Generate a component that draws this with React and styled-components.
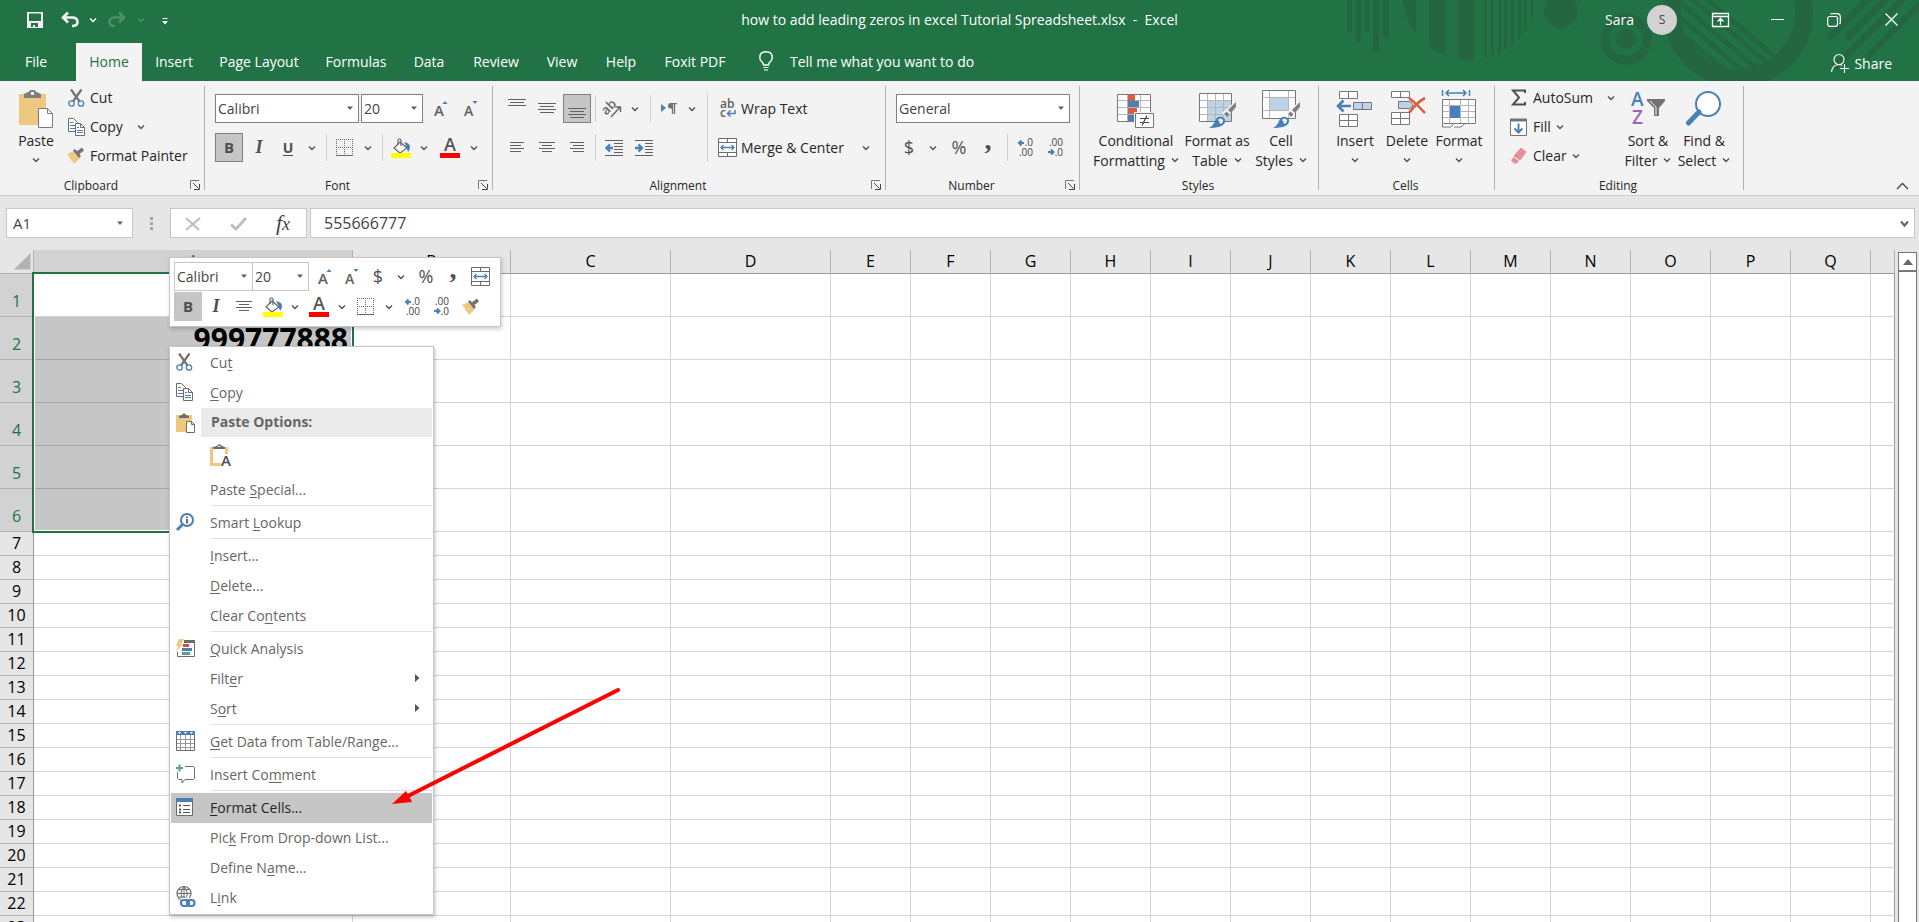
import React from 'react';
import styled, { createGlobalStyle } from 'styled-components';

const App = () => {
	return (
		<>
			<GlobalStyle />
			<Window>
				<Banner>
					<BannerArt />
					<TitleBar />
					<TabBar />
				</Banner>
				<Ribbon />
				<FormulaBar />
				<Sheet />
			</Window>
		</>
	);
};

export default App;

/* Data --- */

const tabs = [
	{ name: 'File', width: 72 },
	{ name: 'Home', width: 66, active: true },
	{ name: 'Insert', width: 64 },
	{ name: 'Page Layout', width: 106 },
	{ name: 'Formulas', width: 88 },
	{ name: 'Data', width: 58 },
	{ name: 'Review', width: 76 },
	{ name: 'View', width: 56 },
	{ name: 'Help', width: 62 },
	{ name: 'Foxit PDF', width: 86 },
];

const columns = [
	{ name: 'A', width: 319 },
	{ name: 'B', width: 158 },
	{ name: 'C', width: 160 },
	{ name: 'D', width: 160 },
	...'EFGHIJKLMNOPQ'.split('').map((name) => ({ name, width: 80 })),
];

const rows = Array.from({ length: 23 }, (_, i) => i + 1);
const lastSelected = 6;
const cellValues = { A2: '999777888' };

/* An ampersand marks the access key of the entry. */
const menuItems = [
	{ label: 'Cu&t', icon: 'cut' },
	{ label: '&Copy', icon: 'copy' },
	{ heading: 'Paste Options:', icon: 'pasteSmall' },
	{ paste: true },
	{ label: 'Paste &Special...' },
	{ line: true },
	{ label: 'Smart &Lookup', icon: 'lookup' },
	{ line: true },
	{ label: '&Insert...' },
	{ label: '&Delete...' },
	{ label: 'Clear Co&ntents' },
	{ line: true },
	{ label: '&Quick Analysis', icon: 'analysis' },
	{ label: 'Filt&er', sub: true },
	{ label: 'S&ort', sub: true },
	{ line: true },
	{ label: '&Get Data from Table/Range...', icon: 'dataTable' },
	{ line: true },
	{ label: 'Insert Co&mment', icon: 'comment' },
	{ line: true },
	{ label: '&Format Cells...', icon: 'formatCells', active: true },
	{ label: 'Pic&k From Drop-down List...' },
	{ label: 'Define N&ame...' },
	{ label: 'L&ink', icon: 'link' },
];

/* Icons --- */

const gray = '#737373';
const blue = '#4a7fb8';
const sans = '"Open Sans", "Noto Sans", sans-serif';

const Svg = ({ w, h, children, ...rest }) => (
	<svg width={w} height={h} viewBox={`0 0 ${w} ${h}`} fill="none" aria-hidden="true" {...rest}>
		{children}
	</svg>
);

const Chevron = ({ color = '#505050' }) => (
	<Svg w={8} h={6}>
		<path d="M1 1.5L4 4.5L7 1.5" stroke={color} strokeWidth="1.4" />
	</Svg>
);

const Triangle = () => (
	<Svg w={8} h={5}>
		<path d="M1 0.5H7L4 4Z" fill="#606060" />
	</Svg>
);

const Launcher = () => (
	<Svg w={10} h={10}>
		<path d="M0.5 9V0.5H9" stroke="#777" />
		<path d="M3 3L8.5 8.5M9.5 4V9.5H4" stroke="#444" />
	</Svg>
);

const lines = (rowsOfLines) =>
	rowsOfLines.map(([x1, x2, y]) => <path key={y} d={`M${x1} ${y + 0.5}H${x2}`} stroke="#606060" />);

const icons = {
	paste: (
		<Svg w={34} h={38}>
			<path d="M0 4H27V35H0Z" fill="#eec881" />
			<path d="M5 8V4L9 2H10Q10 0 12 0H15Q17 0 17 2H18L22 4V8Z" fill="#7f7f7f" />
			<path d="M12 2H15V5H12Z" fill="#f3f3f3" />
			<path d="M19.5 18.5H28.5L33.5 23.5V37.5H19.5Z" fill="#fff" stroke="#7a7a7a" />
			<path d="M28.5 18.5V23.5H33.5" stroke="#7a7a7a" />
		</Svg>
	),
	pasteSmall: (
		<Svg w={19} h={20}>
			<path d="M0 2H16V19H0Z" fill="#eec881" />
			<path d="M3 5V3L6 2Q8 -1.5 10 2L13 3V5Z" fill="#6b6b6b" />
			<path d="M10.5 8.5H15.5L18.5 11.5V19.5H10.5Z" fill="#fff" stroke="#6b6b6b" />
			<path d="M15.5 8.5V11.5H18.5" stroke="#6b6b6b" />
		</Svg>
	),
	pasteText: (
		<Svg w={22} h={23}>
			<path d="M1.5 3V20.5H11M16.5 3V10" stroke="#eec881" strokeWidth="3" />
			<path d="M3 5V3L7 2Q9.500 -1.5 12 2L15 3V5Z" fill="#6b6b6b" />
			<path d="M8 2.5H10.5" stroke="#fff" />
			<text x="11" y="22" fontFamily={sans} fontWeight="600" fontSize="15" fill="#505050">A</text>
		</Svg>
	),
	cut: (
		<Svg w={17} h={18}>
			<path d="M3 0.5L11.5 12.5M13.5 0.5L5 12.5" stroke={gray} strokeWidth="2.2" />
			<circle cx="3.5" cy="14.5" r="2.7" stroke={blue} strokeWidth="1.3" />
			<circle cx="13" cy="14.5" r="2.7" stroke={blue} strokeWidth="1.3" />
		</Svg>
	),
	copy: (
		<Svg w={17} h={18}>
			<path d="M0.5 0.5H5.5L9.5 4.5V13.5H0.5Z" fill="#fff" stroke="#6b6b6b" />
			<path d="M2 4.5H5M2 7.5H7M2 10.5H7" stroke={blue} />
			<path d="M7.5 5.5H12.5L16.5 9.5V17.5H7.5Z" fill="#fff" stroke="#6b6b6b" />
			<path d="M12.5 5.5V9.5H16.5" stroke="#6b6b6b" />
			<path d="M9 9.5H11M9 12.5H15M9 14.5H15" stroke={blue} />
		</Svg>
	),
	painter: (
		<Svg w={18} h={16}>
			<path d="M0 6L7 3L13 10L7 16Q6 13 4 12Q3 9 0 6Z" fill="#eec881" />
			<path d="M6 2.5L8 1L14 8L12 10Z" fill={gray} />
			<path d="M10 5.5L16 1" stroke={gray} strokeWidth="3.5" />
		</Svg>
	),
	growFont: (
		<Svg w={14} h={16}>
			<text x="0" y="15" fontFamily={sans} fontWeight="600" fontSize="15" fill="#606060">A</text>
			<path d="M8.5 3H13.5L11 0Z" fill={blue} />
		</Svg>
	),
	shrinkFont: (
		<Svg w={14} h={16}>
			<text x="0" y="15" fontFamily={sans} fontWeight="600" fontSize="14" fill="#606060">A</text>
			<path d="M8.5 0H13.5L11 3Z" fill={blue} />
		</Svg>
	),
	borders: (
		<Svg w={17} h={17} shapeRendering="crispEdges">
			<path d="M0 0.5H17M0.5 0V16M16.5 0V16M8.5 0V16M0 8.5H17" stroke="#666" strokeDasharray="1 1" />
			<path d="M0 16.5H17" stroke="#666" />
		</Svg>
	),
	fillColor: (
		<Svg w={20} h={20}>
			<path d="M9 4L16 10L9 15L3 10Z" fill="#fff" stroke="#666" strokeWidth="1.2" />
			<path d="M7 7V2Q8.5 -0.5 10 2V8" stroke="#666" strokeWidth="1.2" />
			<path d="M13 4Q19 5 19 9Q19 12 17 14Q16 9 13 4Z" fill={blue} />
			<path d="M0 15H20V20H0Z" fill="#ff0" />
		</Svg>
	),
	fontColor: (
		<Svg w={20} h={20}>
			<text x="4" y="13" fontFamily={sans} fontWeight="600" fontSize="18" fill="#555">A</text>
			<path d="M0 15H20V20H0Z" fill="#f00" />
		</Svg>
	),
	alignTop: <Svg w={18} h={20}>{lines([[0, 18, 0], [2, 16, 3], [0, 18, 6]])}</Svg>,
	alignMiddle: <Svg w={18} h={12}>{lines([[0, 18, 0], [2, 16, 3], [0, 18, 6], [2, 16, 9]])}</Svg>,
	alignBottom: <Svg w={18} h={20}>{lines([[0, 18, 9], [2, 16, 12], [0, 18, 15], [2, 16, 18]])}</Svg>,
	alignLeft: <Svg w={14} h={12}>{lines([[0, 14, 0], [0, 11, 3], [0, 14, 6], [0, 11, 9]])}</Svg>,
	alignCenter: <Svg w={16} h={12}>{lines([[0, 16, 0], [3, 13, 3], [0, 16, 6], [3, 13, 9]])}</Svg>,
	alignRight: <Svg w={14} h={12}>{lines([[0, 14, 0], [3, 14, 3], [0, 14, 6], [3, 14, 9]])}</Svg>,
	orientation: (
		<Svg w={20} h={18}>
			<text x="0" y="12" transform="rotate(-45 6 10)" fontFamily={sans} fontWeight="600" fontSize="13" fill="#666">ab</text>
			<path d="M8 17L17 7M12.5 7H17.5V12" stroke="#666" strokeWidth="1.4" />
		</Svg>
	),
	direction: (
		<Svg w={16} h={12}>
			<path d="M0 1L5 5L0 9Z" fill={blue} />
			<path d="M11.5 0V11M13.5 0V11M9 0.7H16" stroke={gray} strokeWidth="1.3" />
			<path d="M11 0H9.5Q7 0 7 3Q7 5.5 9.5 5.5H11Z" fill={gray} />
		</Svg>
	),
	outdent: (
		<Svg w={18} h={16}>
			{lines([[0, 18, 0], [9, 18, 3], [9, 18, 6], [9, 18, 9], [9, 18, 12], [0, 18, 15]])}
			<path d="M8 8H1.5M5 4.5L1.5 8L5 11.5" stroke={blue} strokeWidth="2.4" />
		</Svg>
	),
	indent: (
		<Svg w={18} h={16}>
			{lines([[0, 18, 0], [10, 18, 3], [10, 18, 6], [10, 18, 9], [10, 18, 12], [0, 18, 15]])}
			<path d="M0 8H6.5M3.5 4.5L7 8L3.5 11.5" stroke={blue} strokeWidth="2.4" />
		</Svg>
	),
	wrap: (
		<Svg w={18} h={18}>
			<text x="2" y="8" fontFamily={sans} fontWeight="600" fontSize="12" fill="#606060">ab</text>
			<text x="2" y="17" fontFamily={sans} fontWeight="600" fontSize="12" fill="#606060">c</text>
			<path d="M17 10V13.5H10M12.5 10.5L9.5 13.5L12.5 16.5" stroke={blue} strokeWidth="1.5" />
		</Svg>
	),
	merge: (
		<Svg w={19} h={19}>
			<path d="M0.5 0.5H18.5V18.5H0.5ZM0.5 4.5H18.5M0.5 14.5H18.5M9.5 0.5V4.5M9.5 14.5V18.5" fill="#fff" stroke="#6b6b6b" />
			<path d="M3 9.5H16M5.5 7L3 9.5L5.5 12M13.5 7L16 9.5L13.5 12" stroke={blue} strokeWidth="1.4" />
		</Svg>
	),
	moreDecimals: (
		<Svg w={16} h={18}>
			<path d="M6 4H1M3.5 1.5L1 4L3.5 6.5" stroke={blue} strokeWidth="2" />
			<text x="15" y="7" textAnchor="end" fontFamily={sans} fontSize="10" fill="#444">.0</text>
			<text x="15" y="17" textAnchor="end" fontFamily={sans} fontSize="10" fill="#444">.00</text>
		</Svg>
	),
	fewerDecimals: (
		<Svg w={16} h={18}>
			<path d="M0 13H5M3 10.5L5.500 13L3 15.5" stroke={blue} strokeWidth="2" />
			<text x="15" y="7" textAnchor="end" fontFamily={sans} fontSize="10" fill="#444">.00</text>
			<text x="15" y="17" textAnchor="end" fontFamily={sans} fontSize="10" fill="#444">.0</text>
		</Svg>
	),
	conditional: (
		<Svg w={38} h={38}>
			<path d="M0.5 4.5H33.5V31.5H0.5Z" fill="#fff" />
			<path d="M0.5 10.5H33.5M0.5 17.5H33.5M0.5 24.5H33.5M10.5 4V31M23.5 4V31" stroke="#b5b5b5" />
			<path d="M0.5 4.5H33.5V31.5H0.5Z" stroke="#777" />
			<path d="M11 5H18V11H11ZM11 18H20V24H11Z" fill="#d75f3d" />
			<path d="M11 11H22V17H11ZM11 25H17V31H11Z" fill={blue} />
			<path d="M17 22H37V38H17Z" fill="#f3f3f3" />
			<path d="M18.5 23.5H36.5V37.5H18.5Z" fill="#fff" stroke="#777" />
			<path d="M23 28.5H32M23 32.5H32M30 25.5L25 35.5" stroke="#444" strokeWidth="1.2" />
		</Svg>
	),
	formatTable: (
		<Svg w={38} h={38}>
			<path d="M1.5 3.5H33.5V31.5H1.5Z" fill="#fff" />
			<path d="M10 11H33V31H10Z" fill="#bed2e8" />
			<path d="M1 10.5H34M1 17.5H34M1 24.5H34M9.5 3V31M17.5 3V31M25.5 3V31" stroke="#b5b5b5" />
			<path d="M1.5 3.5H33.5V31.5H1.5Z" stroke="#777" />
			<Brush />
		</Svg>
	),
	cellStyles: (
		<Svg w={38} h={38}>
			<path d="M0.5 0.5H33.5V28.5H0.5Z" fill="#fff" />
			<path d="M8 8H26V20H8Z" fill="#bed2e8" />
			<path d="M0 7.5H34M0 20.5H34M7.5 0V28M26.5 0V28" stroke="#b5b5b5" />
			<path d="M0.5 0.5H33.5V28.5H0.5Z" stroke="#777" />
			<Brush />
		</Svg>
	),
	insertCells: (
		<Svg w={38} h={38}>
			<path d="M3.5 1.5H21.5V8.5H3.5ZM12.5 1.5V8.5M3.5 24.5H21.5V36.5H3.5ZM12.5 24.5V36.5M3.5 30.5H21.5" fill="#fff" stroke="#777" />
			<path d="M17.5 12.5H35.5V19.5H17.5ZM26.5 12.5V19.5" fill="#bed2e8" stroke="#777" />
			<path d="M15 16H2M7.5 10.5L2 16L7.5 21.5" stroke={blue} strokeWidth="2.6" />
		</Svg>
	),
	deleteCells: (
		<Svg w={38} h={38}>
			<path d="M3.5 1.5H21.5V7.5H3.5ZM12.5 1.5V7.5M3.5 22.5H21.5V34.5H3.5ZM12.5 22.5V34.5M3.5 28.5H21.5" fill="#fff" stroke="#777" />
			<path d="M10.5 11.5H22L25 15L22 18.5H10.5Z" fill="#bed2e8" stroke="#777" />
			<path d="M21 8Q29 14 37 23M37 8Q28 13 21 23" stroke="#d75f3d" strokeWidth="2.6" />
		</Svg>
	),
	formatCellsBig: (
		<Svg w={38} h={38}>
			<path d="M2.5 0V6M29.5 0V6M6 3H26M9 0L6 3L9 6M23 0L26 3L23 6" stroke={blue} strokeWidth="1.5" />
			<path d="M2.5 9.5H35.5V33.5H2.5Z" fill="#fff" stroke="#777" />
			<path d="M3 15.5H35M3 27.5H35M9.5 10V33M20.5 10V33M28.5 10V33M3 21.5H35" stroke="#b5b5b5" />
			<path d="M10 16H20V28H10Z" fill={blue} />
			<path d="M2.5 33.5V37H11L14 33.5H25L21 37H14" fill="#fff" stroke="#777" />
		</Svg>
	),
	sum: (
		<Svg w={18} h={18}>
			<path d="M15 4V1.5H3L9 8.5L3 15.5H15V13" stroke="#505050" strokeWidth="2" />
		</Svg>
	),
	fill: (
		<Svg w={18} h={18}>
			<path d="M0.5 1.5H16.5V17.5H0.5Z" fill="#fff" stroke={gray} />
			<path d="M0 2H17" stroke={gray} strokeWidth="3" />
			<path d="M8.5 5.5V14M4.5 10.5L8.5 14.5L12.5 10.5" stroke={blue} strokeWidth="2" />
		</Svg>
	),
	clear: (
		<Svg w={18} h={18}>
			<path d="M11 1L16 5L10 13L4 9Z" fill="#e88d9b" stroke="#e88d9b" strokeLinejoin="round" />
			<path d="M3.5 10L9 14L7 16.5H4L1 13.5Z" fill="#e88d9b" />
		</Svg>
	),
	sort: (
		<Svg w={36} h={38}>
			<text x="1" y="16" fontFamily={sans} fontWeight="600" fontSize="19" fill={blue}>A</text>
			<text x="2" y="34" fontFamily={sans} fontWeight="600" fontSize="19" fill="#9b62b8">Z</text>
			<path d="M17 9H35V11L29 18V26H24V18L17 11Z" fill={gray} />
			<path d="M20 11L26 17V25" stroke="#f3f3f3" />
		</Svg>
	),
	find: (
		<Svg w={36} h={38}>
			<circle cx="22" cy="14" r="12" fill="#fff" stroke={blue} strokeWidth="2" />
			<path d="M13 22L2.5 33" stroke={blue} strokeWidth="5" strokeLinecap="round" />
		</Svg>
	),
	lookup: (
		<Svg w={18} h={18}>
			<circle cx="11" cy="7" r="6" fill="#fff" stroke={blue} strokeWidth="2" />
			<path d="M6.5 11.5L1 17" stroke={blue} strokeWidth="3" />
			<path d="M11 6V10.5M11 3.5V5" stroke="#444" strokeWidth="1.6" />
		</Svg>
	),
	analysis: (
		<Svg w={19} h={18}>
			<path d="M1.5 13V17.5H18.5V3" stroke="#6b6b6b" />
			<path d="M8 1H19V4H8Z" fill="#6b6b6b" />
			<path d="M7 5H13V8H7Z" fill="#d0532f" />
			<path d="M6 9H16V12H6Z" fill={blue} />
			<path d="M6 13H14V16H6Z" fill="#5f9e89" />
			<path d="M3 0H8L5 5H7L0 13L2 7H0Z" fill="#eec881" />
		</Svg>
	),
	dataTable: (
		<Svg w={19} h={20}>
			<path d="M0.5 0.5H18.5V19.5H0.5Z" fill="#fff" />
			<path d="M0 8.5H19M0 12.5H19M0 16.5H19M4.5 4V19M9.5 4V19M14.5 4V19" stroke="#999" />
			<path d="M0.5 3V19.5H18.5V3" stroke="#6b6b6b" />
			<path d="M0 0H19V4H0Z" fill={blue} />
			<path d="M2 1H5L3.5 3ZM8 1H11L9.5 3ZM14 1H17L15.5 3Z" fill="#fff" />
		</Svg>
	),
	comment: (
		<Svg w={19} h={20}>
			<path d="M9 2.5H17.5L18.5 3.5V14.5L17.5 15.5H9L6 19V15.5H2.5L1.5 14.5V8" stroke="#6b6b6b" />
			<path d="M0 4H7M3.5 0.5V7.5" stroke="#5f9e89" strokeWidth="2" />
		</Svg>
	),
	formatCells: (
		<Svg w={17} h={18}>
			<path d="M0.5 0.5H16.5V17.5H0.5Z" fill="#fff" stroke="#6b6b6b" />
			<path d="M0 0H17V4H0Z" fill={blue} />
			<path d="M7 7.5H14M7 11.5H14M7 14.5H14" stroke="#555" />
			<path d="M3 7.5H5M3 11.5H5M3 14.5H5" stroke="#555" strokeWidth="2" />
		</Svg>
	),
	link: (
		<Svg w={20} h={22}>
			<circle cx="8" cy="7.5" r="7" stroke="#6b6b6b" strokeWidth="1.2" />
			<path d="M8 0.5V14M1 7.5H15M2.5 3.5H13.5M2.5 11H9M8 0.5Q2 7.5 8 14.5M8 0.5Q14 7.5 9 13" stroke="#6b6b6b" />
			<path d="M5 12H20V22H5Z" fill="#fff" />
			<rect x="5" y="14" width="8" height="6" rx="3" stroke={blue} strokeWidth="2.2" />
			<rect x="11" y="14" width="7.500" height="6" rx="3" stroke={blue} strokeWidth="2.2" />
		</Svg>
	),
	bulb: (
		<Svg w={14} h={20}>
			<path d="M4.5 14Q4.5 12 2.5 10.5Q0.8 9 0.8 6.5Q0.8 0.8 7 0.8Q13.2 0.8 13.2 6.5Q13.2 9 11.5 10.5Q9.5 12 9.5 14Z" stroke="#fff" strokeWidth="1.4" />
			<path d="M4.5 16.5H9.5M5 19H9" stroke="#fff" strokeWidth="1.2" />
		</Svg>
	),
	save: (
		<Svg w={16} h={16}>
			<path d="M0 0H16V16H0ZM2 1.5V9H14V1.5ZM4 11V15H6V13H8V15H11V11Z" fill="#f3f3f3" fillRule="evenodd" />
		</Svg>
	),
	undo: (
		<Svg w={18} h={16}>
			<path d="M2 5.5H11Q16.5 5.5 16.5 10Q16.5 14 11 14M7 0.5L2 5.5L7 10.5" stroke="#f3f3f3" strokeWidth="2.6" />
		</Svg>
	),
	redo: (
		<Svg w={18} h={16}>
			<path d="M16 5.5H7Q1.5 5.5 1.5 10Q1.5 14 7 14M11 0.5L16 5.5L11 10.5" stroke="#4a9069" strokeWidth="2.6" />
		</Svg>
	),
	customize: (
		<Svg w={6} h={7}>
			<path d="M0.5 0.5H5.5" stroke="#fff" />
			<path d="M0 3H6L3 6.5Z" fill="#fff" />
		</Svg>
	),
	ribbonDisplay: (
		<Svg w={17} h={14}>
			<path d="M0.5 0.5H16.5V13.5H0.5ZM0.5 3.5H16.5M8.5 12V6M5.5 8.5L8.5 5.5L11.5 8.5" stroke="#fff" strokeWidth="1.3" />
		</Svg>
	),
	minimize: <Svg w={13} h={13}><path d="M0 6.5H13" stroke="#fff" /></Svg>,
	restore: (
		<Svg w={14} h={14}>
			<rect x="0.7" y="3.5" width="9.8" height="9.8" rx="2" stroke="#fff" strokeWidth="1.2" />
			<path d="M3.5 1.2Q4 0.7 5 0.7H10Q13.3 0.7 13.3 4V9.5Q13.3 10.5 12.5 11" stroke="#fff" strokeWidth="1.2" />
		</Svg>
	),
	close: <Svg w={13} h={13}><path d="M0.5 0.5L12.5 12.5M12.5 0.5L0.5 12.5" stroke="#fff" strokeWidth="1.3" /></Svg>,
	share: (
		<Svg w={18} h={19}>
			<circle cx="8" cy="5.5" r="5" stroke="#fff" strokeWidth="1.1" />
			<path d="M0.6 18Q1 11 8 10.5Q10 10.5 11 11.5M13.5 10V19M9 14.5H18" stroke="#fff" strokeWidth="1.1" />
		</Svg>
	),
	cancel: <Svg w={16} h={14}><path d="M1 1L14 13M15 1L1 13" stroke="#bdbdbd" strokeWidth="2" /></Svg>,
	check: <Svg w={17} h={14}><path d="M1 7.5L6 12L16 1" stroke="#bdbdbd" strokeWidth="2.8" /></Svg>,
	submenu: <Svg w={5} h={8}><path d="M0 0L4.5 4L0 8Z" fill="#555" /></Svg>,
};

function Brush() {
	return (
		<>
			<path d="M38 11L24 23L28 27L38 18Z" fill="#f3f3f3" />
			<path d="M38 12L30 20L33 23L38 17Z" fill="#808080" />
			<path d="M28.5 21.5L31.5 24.5L29 27L26 24Z" fill="#808080" />
			<path d="M11 38Q15 36 17 31Q19 26 24 27Q29 29 26 34Q23 38 11 38Z" fill={blue} />
			<path d="M20 30Q22 27 25 30Q25 33 22 34Q22 31 20 30Z" fill="#fff" />
		</>
	);
}

function BannerArt() {
	return (
		<Art width="579" height="81" viewBox="1340 0 579 81" aria-hidden="true">
			<defs>
				<clipPath id="disc"><circle cx="1470" cy="-8" r="68" /></clipPath>
				<clipPath id="ring"><circle cx="1736" cy="14" r="58" /></clipPath>
			</defs>
			<path d="M1347 0h5v32h-5zM1356 0h5v42h-5zM1365 0h5v32h-5zM1373 0h6v52h-6zM1383 0h6v38h-6z" />
			<g clipPath="url(#disc)">
				<path d="M1400 0h16v60h-16zM1429 0h17v60h-17zM1458 0h16v60h-16z" />
				{[1484, 1491, 1498, 1504, 1511, 1518, 1524, 1531].map((x) => (
					<rect key={x} x={x} y="0" width="3" height="60" />
				))}
			</g>
			<circle cx="1561" cy="11" r="17" />
			<circle cx="1626" cy="39" r="21" fill="none" stroke="#246642" strokeWidth="9" />
			<circle cx="1626" cy="39" r="10" />
			<circle cx="1738" cy="12" r="66" fill="none" stroke="#246642" strokeWidth="18" />
			<g clipPath="url(#ring)" stroke="#246642" strokeWidth="5">
				<path d="M1670 24L1750 92M1670 9L1760 85M1670 -6L1770 80M1670 -20L1780 74M1685 -20L1790 70" />
			</g>
			<g stroke="#246642" strokeWidth="7">
				<path d="M1828 39L1872 -5M1846 39L1890 -5M1834 68L1907 -5M1866 58L1925 -1" />
			</g>
		</Art>
	);
}

/* Parts --- */

const TitleBar = () => (
	<TitleRow>
		<QuickAccess>
			<BannerButton $w={32} aria-label="Save">{icons.save}</BannerButton>
			<BannerButton $w={38} aria-label="Undo">{icons.undo}</BannerButton>
			<BannerButton $w={8} aria-label="Undo list"><Chevron color="#fff" /></BannerButton>
			<BannerButton $w={40} aria-label="Redo">{icons.redo}</BannerButton>
			<BannerButton $w={8} aria-label="Redo list"><Chevron color="#4a9069" /></BannerButton>
			<BannerButton $w={40} $low aria-label="Customize toolbar">{icons.customize}</BannerButton>
		</QuickAccess>
		<Title>how to add leading zeros in excel Tutorial Spreadsheet.xlsx&nbsp; - &nbsp;Excel</Title>
		<WindowTools>
			<User>Sara</User>
			<Avatar>S</Avatar>
			<BannerButton $w={58} aria-label="Ribbon display options">{icons.ribbonDisplay}</BannerButton>
			<BannerButton $w={56} aria-label="Minimize">{icons.minimize}</BannerButton>
			<BannerButton $w={58} aria-label="Restore">{icons.restore}</BannerButton>
			<BannerButton $w={56} aria-label="Close">{icons.close}</BannerButton>
		</WindowTools>
	</TitleRow>
);

const TabBar = () => (
	<Tabs>
		{tabs.map((tab) => (
			<Tab key={tab.name} $w={tab.width} $active={tab.active} $first={tab.name === 'File'}>
				{tab.name}
			</Tab>
		))}
		<TellMe>
			{icons.bulb}
			Tell me what you want to do
		</TellMe>
		<Share>
			{icons.share}
			Share
		</Share>
	</Tabs>
);

const Combo = ({ label, value, width, plain }) => (
	<ComboBox $w={width} $plain={plain}>
		<ComboSelect aria-label={label} defaultValue={value}>
			<option>{value}</option>
		</ComboSelect>
		<Triangle />
	</ComboBox>
);

const Tool = ({ icon, label, width, children, pressed, plain }) => (
	<ToolButton $w={width} $pressed={pressed} $plain={plain} aria-label={label} aria-pressed={pressed}>
		{icon ? icons[icon] : children}
	</ToolButton>
);

const More = ({ width }) => (
	<ToolButton $w={width} aria-label="More options"><Chevron /></ToolButton>
);

const Big = ({ icon, top, bottom, width }) => (
	<BigButton $w={width}>
		<BigIcon>{icons[icon]}</BigIcon>
		<BigLine>{top}</BigLine>
		<BigLine>
			{bottom}
			<Chevron />
		</BigLine>
	</BigButton>
);

const Small = ({ icon, label, chevron, gap = 8 }) => (
	<SmallButton>
		<SmallIcon>{icons[icon]}</SmallIcon>
		{label}
		{chevron && <ChevronSlot $gap={gap}><Chevron /></ChevronSlot>}
	</SmallButton>
);

const Group = ({ label, width, launcher, children }) => (
	<>
		<GroupBox $w={width}>
			<GroupBody>{children}</GroupBody>
			<GroupFooter>
				<GroupLabel>{label}</GroupLabel>
				{launcher && <LauncherButton aria-label={`${label} settings`}><Launcher /></LauncherButton>}
			</GroupFooter>
		</GroupBox>
		<Separator />
	</>
);

const Ribbon = () => (
	<RibbonBar>
		<Group label="Clipboard" width={204} launcher>
			<Big icon="paste" top="Paste" width={52} />
			<Stack>
				<Small icon="cut" label="Cut" />
				<Small icon="copy" label="Copy" chevron gap={14} />
				<Small icon="painter" label="Format Painter" />
			</Stack>
		</Group>
		<Group label="Font" width={287} launcher>
			<ToolRows>
				<ToolRow>
					<Combo label="Font" value="Calibri" width={144} />
					<Combo label="Font size" value="20" width={62} />
					<Tool icon="growFont" label="Increase font size" width={32} />
					<Tool icon="shrinkFont" label="Decrease font size" width={28} />
				</ToolRow>
				<ToolRow>
					<Tool label="Bold" width={28} pressed><Bold>B</Bold></Tool>
					<Tool label="Italic" width={32}><Italic>I</Italic></Tool>
					<Tool label="Underline" width={26}><Underlined>U</Underlined></Tool>
					<More width={22} />
					<Rule $w={7} />
					<Tool icon="borders" label="Borders" width={28} />
					<More width={20} />
					<Rule $w={8} />
					<Tool icon="fillColor" label="Fill color" width={30} />
					<More width={16} />
					<Tool icon="fontColor" label="Font color" width={36} />
					<More width={12} />
				</ToolRow>
			</ToolRows>
		</Group>
		<Group label="Alignment" width={392} launcher>
			<ToolRows $w={200}>
				<ToolRow>
					<Tool icon="alignTop" label="Top align" width={28} />
					<Tool icon="alignMiddle" label="Middle align" width={32} />
					<Tool icon="alignBottom" label="Bottom align" width={28} pressed />
					<Rule $w={8} />
					<Tool icon="orientation" label="Orientation" width={28} />
					<More width={16} />
					<Rule $w={14} />
					<Tool icon="direction" label="Text direction" width={24} />
					<More width={22} />
				</ToolRow>
				<ToolRow>
					<Tool icon="alignLeft" label="Align left" width={28} />
					<Tool icon="alignCenter" label="Center" width={32} />
					<Tool icon="alignRight" label="Align right" width={28} />
					<Rule $w={8} />
					<Tool icon="outdent" label="Decrease indent" width={30} />
					<Tool icon="indent" label="Increase indent" width={30} />
				</ToolRow>
			</ToolRows>
			<TallRule />
			<ToolRows>
				<Small icon="wrap" label="Wrap Text" />
				<Small icon="merge" label="Merge & Center" chevron gap={18} />
			</ToolRows>
		</Group>
		<Group label="Number" width={193} launcher>
			<ToolRows>
				<ToolRow>
					<Combo label="Number format" value="General" width={174} />
				</ToolRow>
				<ToolRow>
					<Tool label="Currency" width={26}><Glyph>$</Glyph></Tool>
					<More width={22} />
					<Tool label="Percent" width={30}><Glyph>%</Glyph></Tool>
					<Tool label="Comma style" width={28}><Comma>,</Comma></Tool>
					<Rule $w={10} />
					<Tool icon="moreDecimals" label="Increase decimal" width={28} />
					<Tool icon="fewerDecimals" label="Decrease decimal" width={32} />
				</ToolRow>
			</ToolRows>
		</Group>
		<Group label="Styles" width={238}>
			<Big icon="conditional" top="Conditional" bottom="Formatting" width={92} />
			<Big icon="formatTable" top="Format as" bottom="Table" width={70} />
			<Big icon="cellStyles" top="Cell" bottom="Styles" width={58} />
		</Group>
		<Group label="Cells" width={175}>
			<Big icon="insertCells" top="Insert" width={52} />
			<Big icon="deleteCells" top="Delete" width={52} />
			<Big icon="formatCellsBig" top="Format" width={52} />
		</Group>
		<Group label="Editing" width={248}>
			<Stack $w={116}>
				<Small icon="sum" label="AutoSum" chevron gap={14} />
				<Small icon="fill" label="Fill" chevron gap={5} />
				<Small icon="clear" label="Clear" chevron gap={5} />
			</Stack>
			<Big icon="sort" top="Sort &" bottom="Filter" width={54} />
			<Big icon="find" top="Find &" bottom="Select" width={58} />
		</Group>
		<Collapse aria-label="Collapse the ribbon">
			<Svg w={13} h={8}><path d="M1 7L6.5 1.5L12 7" stroke="#444" strokeWidth="1.3" /></Svg>
		</Collapse>
	</RibbonBar>
);

const FormulaBar = () => (
	<FormulaRow>
		<NameBox>
			<NameInput aria-label="Name box" defaultValue="A1" />
			<Triangle />
		</NameBox>
		<Grip>
			<Svg w={3} h={13}><path d="M1.5 0V3M1.5 5V8M1.5 10V13" stroke="#a6a6a6" strokeWidth="3" /></Svg>
		</Grip>
		<FormulaTools>
			<ToolButton $w={44} aria-label="Cancel">{icons.cancel}</ToolButton>
			<ToolButton $w={46} aria-label="Enter">{icons.check}</ToolButton>
			<ToolButton $w={44} aria-label="Insert function"><Fx>f<small>x</small></Fx></ToolButton>
		</FormulaTools>
		<FormulaField>
			<FormulaInput aria-label="Formula" defaultValue="555666777" />
			<ToolButton $w={20} aria-label="Expand formula bar">
				<Svg w={9} h={8}><path d="M1 1.5L4.5 5.5L8 1.5" stroke="#666" strokeWidth="2.2" /></Svg>
			</ToolButton>
		</FormulaField>
	</FormulaRow>
);

const MiniToolbar = () => (
	<Mini>
		<ToolRow>
			<Combo label="Font" value="Calibri" width={79} plain />
			<Combo label="Font size" value="20" width={57} plain />
			<Tool icon="growFont" label="Increase font size" width={34} />
			<Tool icon="shrinkFont" label="Decrease font size" width={20} />
			<Tool label="Currency" width={32}><Glyph>$</Glyph></Tool>
			<More width={14} />
			<Tool label="Percent" width={36}><Glyph>%</Glyph></Tool>
			<Tool label="Comma style" width={18}><Comma>,</Comma></Tool>
			<Tool icon="merge" label="Merge and center" width={36} />
		</ToolRow>
		<ToolRow>
			<Tool label="Bold" width={28} pressed plain><Bold>B</Bold></Tool>
			<Tool label="Italic" width={28}><Italic>I</Italic></Tool>
			<Tool icon="alignCenter" label="Center" width={28} />
			<Tool icon="fillColor" label="Fill color" width={30} />
			<More width={14} />
			<Tool icon="fontColor" label="Font color" width={34} />
			<More width={12} />
			<Tool icon="borders" label="Borders" width={34} />
			<More width={14} />
			<Tool icon="moreDecimals" label="Increase decimal" width={34} />
			<Tool icon="fewerDecimals" label="Decrease decimal" width={24} />
			<Tool icon="painter" label="Format painter" width={34} />
		</ToolRow>
	</Mini>
);

const AccessLabel = ({ text }) => {
	const [before, after] = text.split('&');
	return (
		<MenuText>
			{before}
			<u>{after[0]}</u>
			{after.slice(1)}
		</MenuText>
	);
};

const ContextMenu = () => (
	<Menu>
		{menuItems.map((item, i) => {
			if (item.line) return <MenuLine key={i} />;
			if (item.paste) {
				return (
					<PasteChoice key={i} aria-label="Keep text only">{icons.pasteText}</PasteChoice>
				);
			}
			if (item.heading) {
				return (
					<MenuHeading key={i}>
						<MenuIcon>{icons[item.icon]}</MenuIcon>
						<HeadingText>{item.heading}</HeadingText>
					</MenuHeading>
				);
			}
			return (
				<MenuItem key={i} $active={item.active}>
					<MenuIcon>{icons[item.icon]}</MenuIcon>
					<AccessLabel text={item.label} />
					{item.sub && icons.submenu}
				</MenuItem>
			);
		})}
	</Menu>
);

const Sheet = () => (
	<SheetArea>
		<SheetPane>
			<Grid>
				<colgroup>
					<Col $w={34} />
					{columns.map((col) => <Col key={col.name} $w={col.width} />)}
					<col />
				</colgroup>
				<thead>
					<tr>
						<Corner>
							<Svg w={17} h={17}><path d="M16.5 0V16.5H0Z" fill="#b2b2b2" /></Svg>
						</Corner>
						{columns.map((col) => (
							<ColumnHead key={col.name} $selected={col.name === 'A'}>{col.name}</ColumnHead>
						))}
						<ColumnHead />
					</tr>
				</thead>
				<tbody>
					{rows.map((row) => (
						<tr key={row}>
							<RowHead $selected={row <= lastSelected}>{row}</RowHead>
							{columns.map((col) => (
								<Cell key={col.name} $selected={col.name === 'A' && row > 1 && row <= lastSelected}>
									{cellValues[col.name + row]}
								</Cell>
							))}
							<Cell />
						</tr>
					))}
				</tbody>
			</Grid>
			<Selection />
			<MiniToolbar />
			<ContextMenu />
			<Arrow width="232" height="124" viewBox="390 684 232 124" aria-hidden="true">
				<path d="M618 690L408 796" stroke="#f00" strokeWidth="4" strokeLinecap="round" />
				<path d="M392 804L406 791L409 796L412 802Z" fill="#f00" />
			</Arrow>
		</SheetPane>
		<ScrollBar>
			<ScrollUp aria-label="Scroll up">
				<Svg w={10} h={6}><path d="M0 6L5 0L10 6Z" fill="#666" /></Svg>
			</ScrollUp>
			<ScrollThumb />
		</ScrollBar>
	</SheetArea>
);

/* Styles --- */

const GlobalStyle = createGlobalStyle`
	* {
		box-sizing: border-box;
	}

	body {
		margin: 0;
		background: #e6e6e6;
		font-family: ${sans};
		font-size: 14px;
		color: #262626;
	}

	button,
	input,
	select {
		margin: 0;
		padding: 0;
		border: 0;
		background: none;
		font: inherit;
		color: inherit;
		outline: none;
	}

	svg {
		display: block;
		flex: none;
		overflow: visible;
	}
`;

const Window = styled.div`
	display: flex;
	flex-direction: column;
	height: 100vh;
	overflow: hidden;
`;

const Banner = styled.header`
	position: relative;
	background: #217346;
	color: #fff;
`;

const Art = styled.svg`
	position: absolute;
	top: 0;
	right: 0;
	overflow: hidden;
	fill: #246642;
`;

const TitleRow = styled.div`
	position: relative;
	display: grid;
	grid-template-columns: 1fr auto 1fr;
	align-items: center;
	height: 43px;
	padding-bottom: 4px;
`;

const QuickAccess = styled.div`
	display: flex;
	padding-left: 19px;
`;

const BannerButton = styled.button`
	display: flex;
	align-items: center;
	justify-content: center;
	width: ${(p) => p.$w}px;
	height: 32px;
	padding-top: ${(p) => (p.$low ? 4 : 0)}px;
`;

const Title = styled.div`
	white-space: nowrap;
`;

const WindowTools = styled.div`
	display: flex;
	align-items: center;
	justify-content: flex-end;
`;

const User = styled.span`
	margin-right: 13px;
`;

const Avatar = styled.span`
	display: flex;
	align-items: center;
	justify-content: center;
	width: 30px;
	height: 30px;
	margin-right: 14px;
	border-radius: 50%;
	background: #d2d2d2;
	font-size: 12px;
	color: #444;
`;

const Tabs = styled.nav`
	position: relative;
	display: flex;
	height: 38px;
`;

const Tab = styled.button`
	width: ${(p) => p.$w}px;
	margin-right: ${(p) => (p.$first ? 4 : 0)}px;
	padding-bottom: 2px;
	background: ${(p) => (p.$active ? '#f3f3f3' : 'transparent')};
	color: ${(p) => (p.$active ? '#217346' : '#fff')};
	white-space: nowrap;
`;

const TellMe = styled.button`
	display: flex;
	align-items: center;
	gap: 17px;
	padding: 0 0 2px 21px;
`;

const Share = styled.button`
	display: flex;
	align-items: center;
	gap: 5px;
	margin-left: auto;
	padding: 2px 27px 0 0;
`;

const RibbonBar = styled.div`
	display: flex;
	height: 115px;
	border-bottom: 1px solid #cfcfcf;
	background: #f3f3f3;
`;

const GroupBox = styled.section`
	display: flex;
	flex-direction: column;
	flex: none;
	width: ${(p) => p.$w}px;
`;

const GroupBody = styled.div`
	display: flex;
	flex: 1;
	padding-left: 10px;
`;

const GroupFooter = styled.div`
	display: flex;
	align-items: center;
	height: 20px;
`;

const GroupLabel = styled.div`
	flex: 1;
	padding-right: 2px;
	font-size: 12px;
	text-align: center;
`;

const LauncherButton = styled.button`
	width: 20px;
	padding-left: 6px;
`;

const Separator = styled.div`
	flex: none;
	width: 1px;
	margin: 5px 0;
	background: #b1b1b1;
`;

const Collapse = styled.button`
	align-self: flex-end;
	margin-left: auto;
	padding: 0 10px 5px 0;
`;

const Stack = styled.div`
	display: flex;
	flex-direction: column;
	width: ${(p) => (p.$w ? `${p.$w}px` : 'auto')};
	padding-top: 2px;
`;

const SmallButton = styled.button`
	display: flex;
	align-items: center;
	gap: 5px;
	height: 29px;
	padding-left: 5px;
	white-space: nowrap;
`;

const SmallIcon = styled.span`
	display: flex;
	justify-content: center;
	width: 18px;
`;

const ChevronSlot = styled.span`
	margin-left: ${(p) => p.$gap - 5}px;
`;

const BigButton = styled.button`
	display: flex;
	flex-direction: column;
	align-items: center;
	width: ${(p) => p.$w}px;
	padding-top: 9px;
`;

const BigIcon = styled.span`
	display: block;
	height: 40px;
`;

const BigLine = styled.span`
	display: flex;
	align-items: center;
	gap: 6px;
	height: 20px;
	white-space: nowrap;
`;

const ToolRows = styled.div`
	display: flex;
	flex-direction: column;
	gap: 10px;
	width: ${(p) => (p.$w ? `${p.$w}px` : 'auto')};
	padding-top: 13px;
`;

const ToolRow = styled.div`
	display: flex;
	height: 29px;
`;

const ToolButton = styled.button`
	display: flex;
	flex: none;
	align-items: center;
	justify-content: center;
	width: ${(p) => p.$w}px;
	height: 29px;
	border: ${(p) => (p.$pressed && !p.$plain ? '1px solid #808080' : '0')};
	background: ${(p) => (p.$pressed ? '#c6c6c6' : 'transparent')};
	color: #505050;
`;

const Rule = styled.div`
	width: ${(p) => p.$w}px;
	background: linear-gradient(#cfcfcf, #cfcfcf) center / 1px 27px no-repeat;
`;

const TallRule = styled.div`
	width: 1px;
	height: 69px;
	margin: 12px 5px 0 4px;
	background: #cfcfcf;
`;

const Bold = styled.b`
	padding-bottom: 2px;
	font-size: 15px;
`;

const Italic = styled.i`
	font-family: "Liberation Serif", serif;
	font-size: 18px;
	font-weight: bold;
`;

const Underlined = styled.b`
	font-size: 14px;
	line-height: 15px;
	border-bottom: 1px solid #505050;
`;

const Glyph = styled.span`
	padding-bottom: 2px;
	font-size: 18px;
`;

const Comma = styled.b`
	font-family: "Liberation Serif", serif;
	font-size: 28px;
	line-height: 10px;
	padding-bottom: 16px;
`;

const ComboBox = styled.label`
	display: grid;
	flex: none;
	grid-template-columns: 1fr 12px;
	align-items: center;
	width: ${(p) => p.$w}px;
	height: 29px;
	margin-right: ${(p) => (p.$plain ? -1 : 2)}px;
	border: 1px solid ${(p) => (p.$plain ? '#c6c6c6' : '#808080')};
	background: #fff;

	svg {
		grid-area: 1 / 2;
		pointer-events: none;
	}
`;

const ComboSelect = styled.select`
	grid-area: 1 / 1 / 2 / 3;
	width: 100%;
	padding-left: 2px;
	appearance: none;
	color: #444;
`;

const FormulaRow = styled.div`
	display: flex;
	height: 54px;
	padding: 12px 4px 12px 6px;
	font-size: 16px;
	color: #444;
`;

const NameBox = styled.div`
	display: flex;
	align-items: center;
	width: 127px;
	padding-right: 8px;
	border: 1px solid #c6c6c6;
	background: #fff;
`;

const NameInput = styled.input`
	flex: 1;
	min-width: 0;
	padding-left: 6px;
	font-size: 15px;
`;

const Grip = styled.div`
	display: flex;
	align-items: center;
	justify-content: center;
	width: 37px;
`;

const FormulaTools = styled.div`
	display: flex;
	width: 137px;
	border: 1px solid #c6c6c6;
	background: #fff;
`;

const Fx = styled.i`
	padding-bottom: 2px;
	font-family: "Liberation Serif", serif;
	font-size: 22px;
	color: #444;

	small {
		font-size: 18px;
	}
`;

const FormulaField = styled.div`
	display: flex;
	flex: 1;
	margin-left: 3px;
	border: 1px solid #c6c6c6;
	background: #fff;
`;

const FormulaInput = styled.input`
	flex: 1;
	padding-left: 13px;
`;

const SheetArea = styled.main`
	display: flex;
	flex: 1;
	min-height: 0;
`;

const SheetPane = styled.div`
	position: relative;
	flex: 1;
	min-width: 0;
	overflow: hidden;
`;

const Grid = styled.table`
	width: 100%;
	table-layout: fixed;
	border-collapse: separate;
	border-spacing: 0;
	background: #fff;
`;

const Col = styled.col`
	width: ${(p) => p.$w}px;
`;

const Corner = styled.th`
	height: 24px;
	padding: 0 0 0 14px;
	border-right: 1px solid #b1b1b1;
	border-bottom: 1px solid #b1b1b1;
	background: #e6e6e6;
`;

const ColumnHead = styled.th`
	height: 24px;
	padding: 0;
	border-right: 1px solid #b1b1b1;
	border-bottom: 1px solid #999;
	background: ${(p) => (p.$selected ? '#d2d2d2' : '#e6e6e6')};
	color: ${(p) => (p.$selected ? '#217346' : '#000')};
	font-size: 16px;
	font-weight: normal;
	line-height: 23px;
`;

const RowHead = styled.th`
	height: ${(p) => (p.$selected ? 43 : 24)}px;
	padding: ${(p) => (p.$selected ? '12px 0 0' : '0')};
	border-right: 1px solid #999;
	border-bottom: 1px solid #b1b1b1;
	background: ${(p) => (p.$selected ? '#d2d2d2' : '#e6e6e6')};
	color: ${(p) => (p.$selected ? '#217346' : '#000')};
	font-size: 16px;
	font-weight: normal;
	line-height: 23px;
`;

const Cell = styled.td`
	padding: 2px 4px 0;
	border-right: 1px solid #d4d4d4;
	border-bottom: 1px solid ${(p) => (p.$selected ? '#a6a6a6' : '#d4d4d4')};
	background: ${(p) => (p.$selected ? '#c6c6c6' : '#fff')};
	color: #000;
	font-size: 30px;
	font-weight: bold;
	line-height: 40px;
	text-align: right;

	&:last-child {
		border-right-color: #999;
	}
`;

const Selection = styled.div`
	position: absolute;
	left: 32px;
	top: 22px;
	width: 322px;
	height: 261px;
	border: 2px solid #217346;
	box-shadow: inset 0 0 0 1px #fff;
`;

const Mini = styled.div`
	position: absolute;
	left: 169px;
	top: 7px;
	display: flex;
	flex-direction: column;
	gap: 1px;
	padding: 4px;
	width: 332px;
	height: 70px;
	border: 1px solid #c6c6c6;
	background: #fff;
	box-shadow: 1px 2px 4px rgba(0, 0, 0, 0.2);
`;

const Menu = styled.div`
	position: absolute;
	left: 169px;
	top: 96px;
	width: 265px;
	padding: 1px;
	border: 1px solid #c6c6c6;
	background: #fff;
	box-shadow: 1px 2px 4px rgba(0, 0, 0, 0.25);
	color: #666;
`;

const MenuItem = styled.button`
	display: flex;
	align-items: center;
	width: 100%;
	height: 30px;
	padding: 0 12px 2px 5px;
	background: ${(p) => (p.$active ? '#c6c6c6' : 'transparent')};
	color: ${(p) => (p.$active ? '#262626' : 'inherit')};
`;

const MenuIcon = styled.span`
	display: flex;
	width: 34px;
`;

const MenuText = styled.span`
	flex: 1;
	text-align: left;
	white-space: nowrap;

	u {
		text-underline-offset: 2px;
	}
`;

const MenuHeading = styled.div`
	display: flex;
	align-items: center;
	height: 29px;
	padding-left: 5px;
`;

const HeadingText = styled.strong`
	flex: 1;
	margin-left: -9px;
	padding: 0 0 2px 10px;
	background: #eaeaea;
	line-height: 27px;
`;

const PasteChoice = styled.button`
	display: flex;
	align-items: center;
	height: 38px;
	padding: 0 0 2px 39px;
`;

const MenuLine = styled.hr`
	height: 3px;
	margin: 0 0 0 40px;
	border: 0;
	border-top: 1px solid #e1e1e1;
`;

const Arrow = styled.svg`
	position: absolute;
	left: 390px;
	top: 434px;
`;

const ScrollBar = styled.div`
	display: flex;
	flex-direction: column;
	width: 24px;
	padding: 2px 2px 0 3px;
`;

const ScrollUp = styled.button`
	display: flex;
	align-items: center;
	justify-content: center;
	height: 19px;
	border: 1px solid #777;
	background: #fff;
`;

const ScrollThumb = styled.div`
	flex: 1;
	border: 1px solid #777;
	border-bottom: 0;
	background: #fff;
`;
